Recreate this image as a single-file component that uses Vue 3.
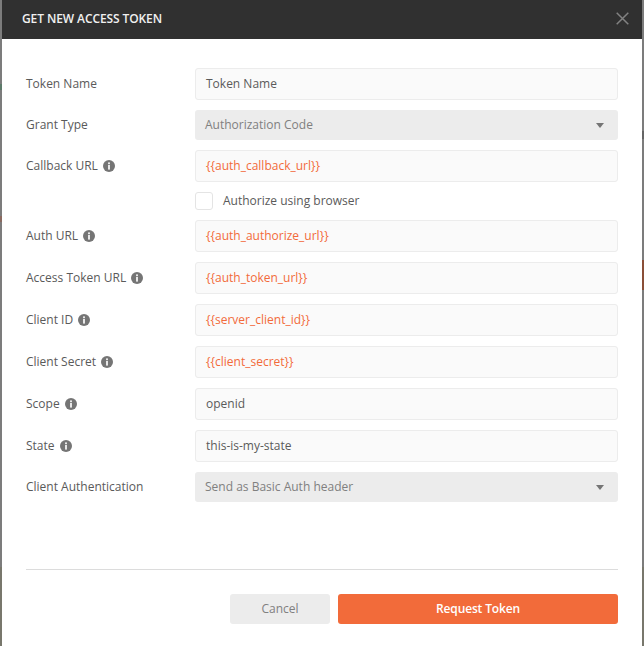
<template>
  <div class="backdrop">
    <div class="modal">
      <header class="modal-header">
        <h1 class="modal-title">GET NEW ACCESS TOKEN</h1>
        <svg class="close-icon" width="13" height="13" viewBox="0 0 13 13">
          <path d="M0.7 0.7L12.3 12.3M12.3 0.7L0.7 12.3" stroke="#828282" stroke-width="1.5" fill="none" />
        </svg>
      </header>

      <div class="modal-body">
        <template v-for="row in rows" :key="row.label">
          <div class="form-row">
            <div class="form-label">
              <span class="label-text">{{ row.label }}</span>
              <svg v-if="row.info" class="info-icon" width="12" height="12" viewBox="0 0 12 12">
                <circle cx="6" cy="6" r="6" fill="#757575" />
                <rect x="5" y="2.4" width="2" height="1.6" fill="#e8e8e8" />
                <rect x="5" y="4.8" width="2" height="4.8" fill="#e8e8e8" />
              </svg>
            </div>
            <div v-if="row.select" class="select-box">
              <span class="select-text">{{ row.value }}</span>
              <svg class="caret" width="8" height="5" viewBox="0 0 8 5">
                <path d="M0 0H8L4 5Z" fill="#757575" />
              </svg>
            </div>
            <div v-else :class="['text-input', { 'is-variable': row.variable }]">{{ row.value }}</div>
          </div>
          <div v-if="row.checkbox" class="check-row">
            <span class="checkbox"></span>
            <span class="label-text">{{ row.checkbox }}</span>
          </div>
        </template>
      </div>

      <footer class="modal-footer">
        <div class="actions">
          <button class="btn btn-cancel" type="button">Cancel</button>
          <button class="btn btn-primary" type="button">Request Token</button>
        </div>
      </footer>
    </div>
  </div>
</template>

<script setup>
const rows = [
  { label: 'Token Name', value: 'Token Name' },
  { label: 'Grant Type', value: 'Authorization Code', select: true },
  { label: 'Callback URL', value: '{{auth_callback_url}}', info: true, variable: true, checkbox: 'Authorize using browser' },
  { label: 'Auth URL', value: '{{auth_authorize_url}}', info: true, variable: true },
  { label: 'Access Token URL', value: '{{auth_token_url}}', info: true, variable: true },
  { label: 'Client ID', value: '{{server_client_id}}', info: true, variable: true },
  { label: 'Client Secret', value: '{{client_secret}}', info: true, variable: true },
  { label: 'Scope', value: 'openid', info: true },
  { label: 'State', value: 'this-is-my-state', info: true },
  { label: 'Client Authentication', value: 'Send as Basic Auth header', select: true }
]
</script>

<style>
html,
body {
  margin: 0;
  background: #fff;
}
</style>

<style scoped>
/* the app behind the dialog only shows as a 2px sliver on each side */
.backdrop {
  width: 644px;
  height: 648px;
  padding: 0 2px;
  box-sizing: border-box;
  font-family: 'Open Sans', sans-serif;
  font-size: 12px;
  color: #5a5a5a;
  background:
    linear-gradient(#7c7c7c 84px, #5d7a6a 84px, #5d7a6a 90px, #7c7c7c 90px, #7c7c7c 216px, #8a6a60 216px, #8a6a60 222px, #7c7c7c 222px, #7c7c7c 567px, #78776c 567px) left top / 2px 646px no-repeat,
    linear-gradient(#7c7c7c 131px, #656565 131px, #656565 139px, #7c7c7c 139px, #7c7c7c 260px, #8a4f38 260px, #8a4f38 290px, #7c7c7c 290px, #7c7c7c 567px, #78776c 567px) right top / 2px 646px no-repeat,
    #fff;
}

.modal {
  display: flex;
  flex-direction: column;
  height: 100%;
  background: #fff;
}

.modal-header {
  display: flex;
  align-items: center;
  justify-content: space-between;
  height: 39px;
  padding: 0 13px 0 20px;
  background: #303030;
}

.modal-title {
  margin: 0;
  padding-bottom: 2px;
  font-size: 12px;
  font-weight: 600;
  letter-spacing: -0.1px;
  color: #f0f0f0;
}

.close-icon {
  display: block;
  margin-bottom: 3px;
}

.modal-body {
  display: flex;
  flex-direction: column;
  gap: 10px;
  padding: 29px 24px 0;
  flex: 1;
}

.form-row {
  display: flex;
  align-items: center;
}

.form-label {
  display: flex;
  align-items: center;
  gap: 5px;
  width: 169px;
  flex-shrink: 0;
}

.label-text {
  padding-bottom: 2px;
}

.info-icon {
  display: block;
}

.text-input {
  flex: 1;
  height: 32px;
  line-height: 30px;
  padding: 0 10px;
  box-sizing: border-box;
  background: #fafafa;
  border: 1px solid #ececec;
  border-radius: 3px;
}

.is-variable {
  color: #f26b3a;
}

.select-box {
  flex: 1;
  display: flex;
  align-items: center;
  justify-content: space-between;
  height: 30px;
  padding: 0 14px 0 10px;
  box-sizing: border-box;
  background: #ececec;
  border-radius: 3px;
  color: #808080;
}

.select-text {
  padding-bottom: 2px;
}

.caret {
  display: block;
}

.check-row {
  display: flex;
  align-items: center;
  gap: 10px;
  height: 18px;
  margin-left: 169px;
}

.checkbox {
  width: 18px;
  height: 18px;
  box-sizing: border-box;
  background: #fff;
  border: 1px solid #e4e4e4;
  border-radius: 3px;
}

.modal-footer {
  margin: 0 24px;
  padding: 24px 0;
  border-top: 1px solid #dcdcdc;
}

.actions {
  display: flex;
  justify-content: flex-end;
  gap: 8px;
}

.btn {
  height: 30px;
  padding: 0 0 2px;
  border: 0;
  border-radius: 3px;
  font-family: inherit;
  font-size: 12px;
}

.btn-cancel {
  width: 100px;
  background: #ececec;
  color: #808080;
}

.btn-primary {
  width: 280px;
  background: #f26b3a;
  color: #fff;
  font-weight: 600;
  letter-spacing: -0.15px;
}
</style>
